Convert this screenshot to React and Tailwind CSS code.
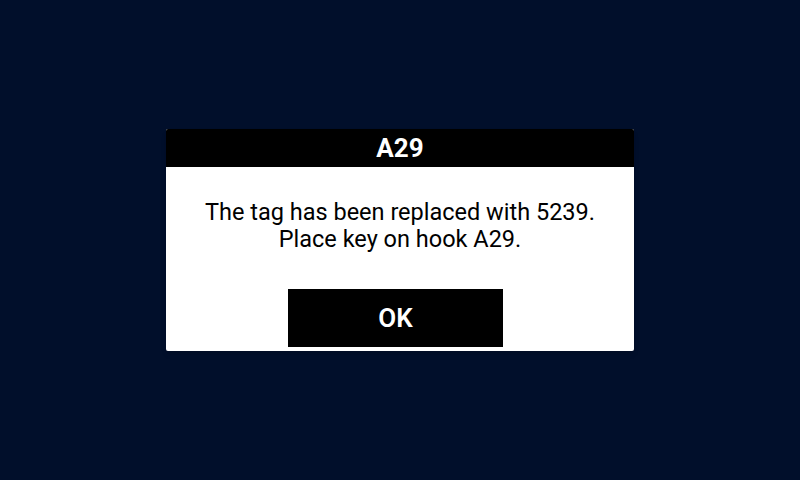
export default function App() {
  return (
    <div
      className="w-screen h-screen flex items-center justify-center bg-[#010f2b]"
      style={{ fontFamily: "Roboto, 'Liberation Sans', sans-serif" }}
    >
      <div className="w-[468px] bg-white rounded-[2px] overflow-hidden shadow-md">
        <div className="h-[38px] bg-black flex items-center justify-center">
          <span className="text-white font-bold text-[26px] leading-none">A29</span>
        </div>
        <div className="pt-[32px] pb-[4px] flex flex-col">
          <p className="text-black text-[23.5px] leading-[27px] text-center">
            The tag has been replaced with 5239.
            <br />
            Place key on hook A29.
          </p>
          <button className="mt-[36px] ml-[122px] w-[215px] h-[58px] bg-black text-white font-semibold text-[26px] flex items-center justify-center">
            OK
          </button>
        </div>
      </div>
    </div>
  );
}
